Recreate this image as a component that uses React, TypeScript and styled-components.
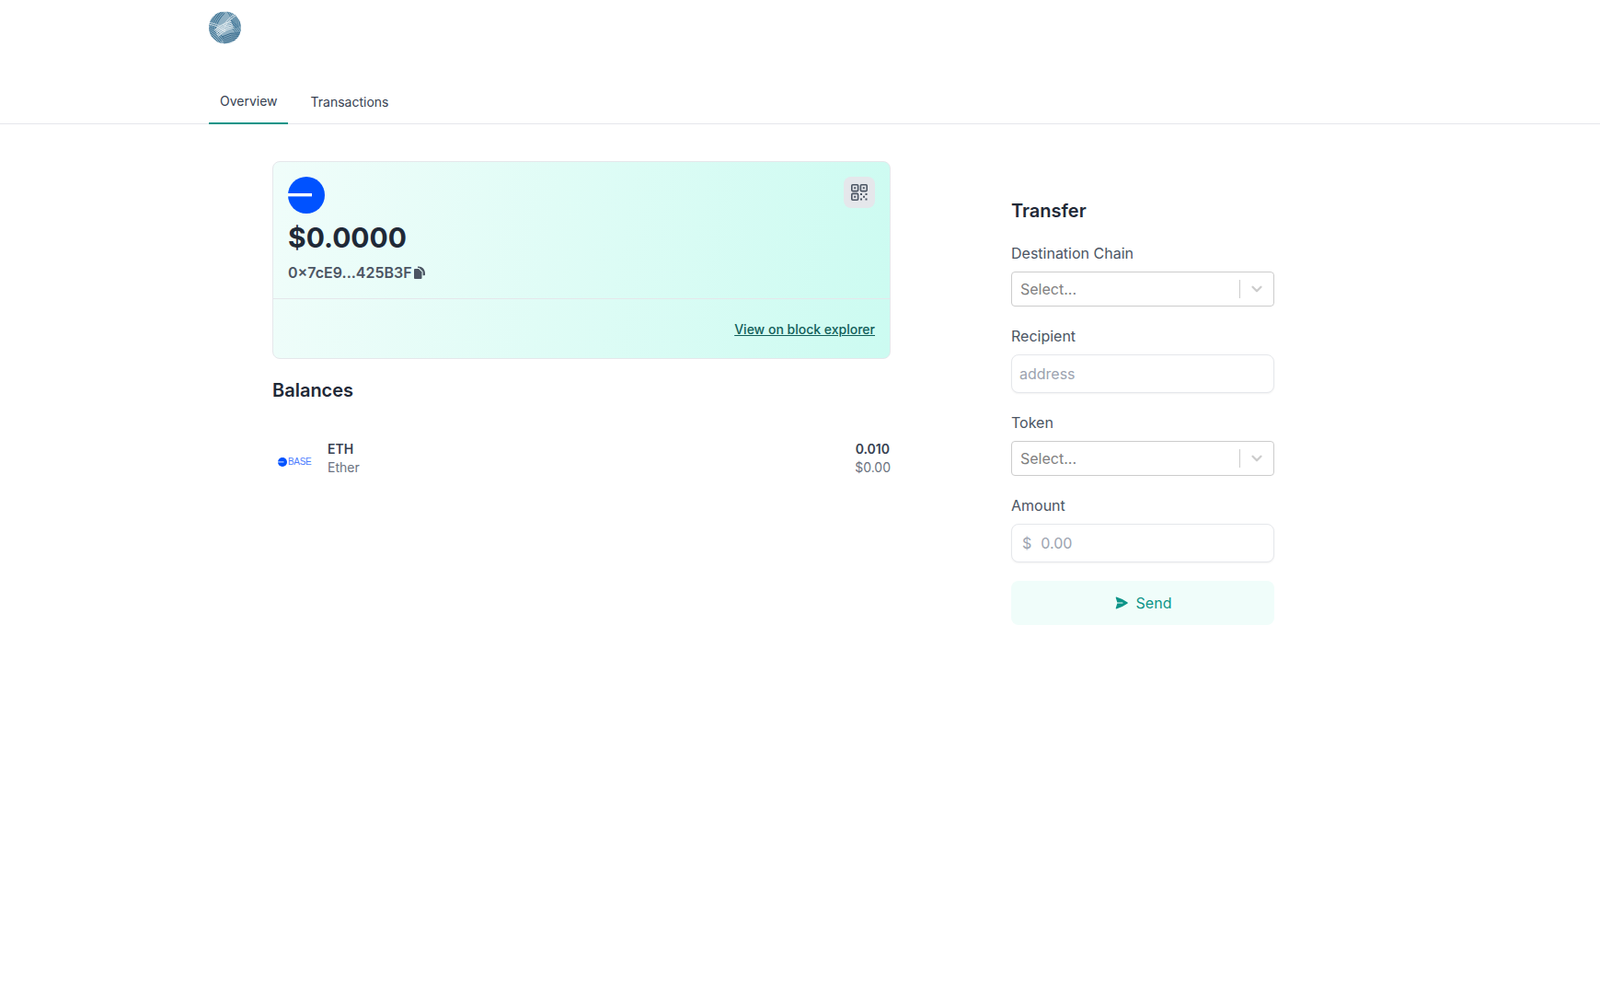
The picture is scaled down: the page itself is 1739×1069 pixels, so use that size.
import React from 'react';
import styled, { createGlobalStyle } from 'styled-components';
import { ChevronDown } from 'lucide-react';

const GlobalStyle = createGlobalStyle`
    * {
        box-sizing: border-box;
    }

    body {
        margin: 0;
        background: #fff;
        font-family: Inter, "Liberation Sans", sans-serif;
        color: #374151;
    }
`;

const Page = styled.div`
    min-height: 1069px;
`;

const Header = styled.header`
    padding: 12px 0 0 227px;
    height: 94px;
`;

const TabBar = styled.nav`
    display: flex;
    height: 41px;
    padding-left: 227px;
    border-bottom: 1px solid #e5e7eb;
`;

const Tab = styled.a<{ $active?: boolean }>`
    display: block;
    height: 41px;
    padding: ${({ $active }) => ($active ? '7px 11px 0 12px' : '8px 12px 0')};
    margin-right: ${({ $active }) => ($active ? '13px' : '0')};
    font-size: 14px;
    line-height: 17px;
    color: #374151;
    border-bottom: ${({ $active }) => ($active ? '2px solid #0d9488' : 'none')};
`;

const Main = styled.main`
    display: flex;
    padding: 40px 0 0 296px;
`;

const LeftColumn = styled.section`
    width: 672px;
`;

const RightColumn = styled.section`
    width: 286px;
    margin-left: 131px;
    padding-top: 40px;
`;

const Card = styled.div`
    height: 215px;
    border: 1px solid #e5e7eb;
    border-radius: 8px;
    background: linear-gradient(100deg, #f0fdfa, #ccfbf1);
`;

const CardTop = styled.div`
    position: relative;
    height: 149px;
    padding: 16px;
    border-bottom: 1px solid #e5e7eb;
`;

const QrButton = styled.div`
    position: absolute;
    top: 16px;
    right: 16px;
    width: 34px;
    height: 34px;
    display: flex;
    align-items: center;
    justify-content: center;
    border-radius: 8px;
    background: #e5e7eb;
`;

const Amount = styled.div`
    margin-top: 4px;
    font-size: 30px;
    line-height: 36px;
    font-weight: 700;
    color: #1f2937;
`;

const Address = styled.div`
    display: flex;
    align-items: center;
    gap: 2px;
    margin-top: 8px;
    font-size: 16px;
    line-height: 24px;
    font-weight: 600;
    color: #4b5563;
`;

const CardBottom = styled.div`
    display: flex;
    justify-content: flex-end;
    padding: 23px 16px 0;
`;

const ExplorerLink = styled.a`
    font-size: 14px;
    line-height: 20px;
    font-weight: 500;
    color: #115e59;
    text-decoration: underline;
`;

const SectionTitle = styled.h2`
    margin: 0;
    font-size: 20px;
    line-height: 28px;
    font-weight: 600;
    color: #1f2937;
`;

const BalancesTitle = styled(SectionTitle)`
    margin-top: 20px;
`;

const BalanceRow = styled.div`
    display: flex;
    align-items: center;
    margin-top: 40px;
`;

const ChainLogo = styled.div`
    display: flex;
    align-items: center;
    width: 60px;
    padding: 7px 0 0 6px;
    gap: 1px;
`;

const ChainName = styled.span`
    font-family: "Liberation Sans", sans-serif;
    font-size: 10px;
    line-height: 12px;
    letter-spacing: -0.3px;
    color: #4d7dff;
`;

const TokenInfo = styled.div`
    flex: 1;
`;

const TokenValues = styled.div`
    text-align: right;
`;

const StrongLine = styled.div<{ $inset?: boolean }>`
    padding-right: ${({ $inset }) => ($inset ? '1px' : '0')};
    font-size: 14px;
    line-height: 20px;
    font-weight: 600;
    color: #374151;
`;

const MutedLine = styled.div`
    font-size: 14px;
    line-height: 20px;
    color: #6b7280;
`;

const TransferTitle = styled(SectionTitle)`
    margin-bottom: 20px;
`;

const FieldLabel = styled.label`
    display: block;
    margin-bottom: 8px;
    font-size: 16px;
    line-height: 24px;
    color: #4b5563;
`;

const Field = styled.div<{ $gap: number }>`
    margin-bottom: ${({ $gap }) => $gap}px;
`;

const SelectBox = styled.div`
    display: flex;
    align-items: center;
    height: 38px;
    padding-left: 9px;
    border: 1px solid #cccccc;
    border-radius: 4px;
    background: #fff;
    font-size: 16px;
    color: #808080;
`;

const SelectValue = styled.span`
    flex: 1;
`;

const SelectSeparator = styled.span`
    width: 1px;
    height: 20px;
    background: #cccccc;
`;

const SelectArrow = styled.span`
    display: flex;
    width: 36px;
    justify-content: center;
    color: #cccccc;
`;

const InputBox = styled.div`
    display: flex;
    align-items: center;
    height: 42px;
    padding: 0 8px;
    border: 1px solid #e5e7eb;
    border-radius: 8px;
    background: #fff;
    box-shadow: 0 1px 2px rgba(0, 0, 0, 0.05);
    font-size: 16px;
    color: #9ca3af;
`;

const AmountPrefix = styled.span`
    margin: 0 10px 0 3px;
`;

const SendButton = styled.button`
    display: flex;
    align-items: center;
    justify-content: center;
    gap: 8px;
    width: 100%;
    height: 48px;
    border: none;
    border-radius: 8px;
    background: #f0fdfa;
    font-family: inherit;
    font-size: 16px;
    color: #0d9488;
`;

// fine hatch patches that give the logo its woven, thumbprint look
const logoPatches = [
    { x: 8, y: 8, angle: -60, color: '#336a8d', count: 6 },
    { x: 27, y: 8, angle: 70, color: '#467a9b', count: 5 },
    { x: 6, y: 26, angle: 40, color: '#336a8d', count: 5 },
    { x: 25, y: 29, angle: -12, color: '#2f6487', count: 5 },
    { x: 28, y: 19, angle: 50, color: '#467a9b', count: 4 },
    { x: 17, y: 19, angle: -28, color: '#e8f0f3', count: 5 },
    { x: 23, y: 10, angle: -45, color: '#dce7ec', count: 2 },
    { x: 9, y: 17, angle: 25, color: '#dce7ec', count: 2 },
];

function TwistLogo() {
    return (
        <svg width="35" height="36" viewBox="0 0 35 35">
            <defs>
                <clipPath id="logo-clip">
                    <circle cx="17.5" cy="17.5" r="17.5" />
                </clipPath>
            </defs>
            <g clipPath="url(#logo-clip)">
                <rect width="35" height="35" fill="#8fb0c3" />
                {logoPatches.map((patch) => (
                    <g key={patch.x + '-' + patch.y} transform={`translate(${patch.x} ${patch.y}) rotate(${patch.angle})`}>
                        {[...Array(patch.count)].map((_, index) => {
                            const offset = (index - (patch.count - 1) / 2) * 1.9;
                            return (
                                <path
                                    key={index}
                                    d={`M-10 ${offset} Q0 ${offset - 3} 10 ${offset}`}
                                    fill="none"
                                    stroke={patch.color}
                                    strokeWidth="0.9"
                                />
                            );
                        })}
                    </g>
                ))}
            </g>
        </svg>
    );
}

function BaseMark({ size }: { size: number }) {
    return (
        <svg width={size} height={size} viewBox="0 0 40 40">
            <circle cx="20" cy="20" r="20" fill="#0052ff" />
            <rect x="0" y="18" width="26" height="3.4" fill="#fff" />
        </svg>
    );
}

function QrIcon() {
    return (
        <svg width="20" height="20" viewBox="0 0 20 20" fill="none" stroke="#4b5563" strokeWidth="1.6">
            <rect x="1.8" y="1.8" width="6.8" height="6.8" rx="1" />
            <rect x="11.4" y="1.8" width="6.8" height="6.8" rx="1" />
            <rect x="1.8" y="11.4" width="6.8" height="6.8" rx="1" />
            <g fill="#4b5563" stroke="none">
                <rect x="4.2" y="4.2" width="2" height="2" />
                <rect x="13.8" y="4.2" width="2" height="2" />
                <rect x="4.2" y="13.8" width="2" height="2" />
                <rect x="11" y="11" width="2" height="2" />
                <rect x="16.5" y="11" width="2" height="2" />
                <rect x="14" y="13.8" width="2" height="2" />
                <rect x="11" y="16.5" width="2" height="2" />
                <rect x="16.5" y="16.5" width="2" height="2" />
            </g>
        </svg>
    );
}

function CopyIcon() {
    return (
        <svg width="12" height="14" viewBox="0 0 12 14" fill="#4b5563">
            <path d="M1 3 H5 L8.5 6.5 V13 a1 1 0 0 1 -1 1 H1 a1 1 0 0 1 -1 -1 V4 a1 1 0 0 1 1 -1 Z" />
            <path d="M4 0.6 C8.5 0.2 12 3.5 12 8 V9.5 a0.8 0.8 0 0 1 -0.8 0.8 H9.6 V6 L5.6 2 H4 Z" />
        </svg>
    );
}

function SendIcon() {
    return (
        <svg width="16" height="16" viewBox="0 0 24 24" fill="#0d9488">
            <path d="M3.478 2.405a.75.75 0 00-.926.94l2.432 7.905H13.5a.75.75 0 010 1.5H4.984l-2.432 7.905a.75.75 0 00.926.94 60.519 60.519 0 0018.445-8.986.75.75 0 000-1.218A60.517 60.517 0 003.478 2.405z" />
        </svg>
    );
}

export default function App() {
    return (
        <Page>
            <GlobalStyle />
            <Header>
                <TwistLogo />
            </Header>
            <TabBar>
                <Tab $active>Overview</Tab>
                <Tab>Transactions</Tab>
            </TabBar>
            <Main>
                <LeftColumn>
                    <Card>
                        <CardTop>
                            <BaseMark size={40} />
                            <QrButton>
                                <QrIcon />
                            </QrButton>
                            <Amount>$0.0000</Amount>
                            <Address>
                                0×7cE9...425B3F
                                <CopyIcon />
                            </Address>
                        </CardTop>
                        <CardBottom>
                            <ExplorerLink>View on block explorer</ExplorerLink>
                        </CardBottom>
                    </Card>
                    <BalancesTitle>Balances</BalancesTitle>
                    <BalanceRow>
                        <ChainLogo>
                            <BaseMark size={10} />
                            <ChainName>BASE</ChainName>
                        </ChainLogo>
                        <TokenInfo>
                            <StrongLine>ETH</StrongLine>
                            <MutedLine>Ether</MutedLine>
                        </TokenInfo>
                        <TokenValues>
                            <StrongLine $inset>0.010</StrongLine>
                            <MutedLine>$0.00</MutedLine>
                        </TokenValues>
                    </BalanceRow>
                </LeftColumn>
                <RightColumn>
                    <TransferTitle>Transfer</TransferTitle>
                    <Field $gap={20}>
                        <FieldLabel>Destination Chain</FieldLabel>
                        <SelectBox>
                            <SelectValue>Select...</SelectValue>
                            <SelectSeparator />
                            <SelectArrow>
                                <ChevronDown size={18} strokeWidth={3} />
                            </SelectArrow>
                        </SelectBox>
                    </Field>
                    <Field $gap={20}>
                        <FieldLabel>Recipient</FieldLabel>
                        <InputBox>address</InputBox>
                    </Field>
                    <Field $gap={20}>
                        <FieldLabel>Token</FieldLabel>
                        <SelectBox>
                            <SelectValue>Select...</SelectValue>
                            <SelectSeparator />
                            <SelectArrow>
                                <ChevronDown size={18} strokeWidth={3} />
                            </SelectArrow>
                        </SelectBox>
                    </Field>
                    <Field $gap={20}>
                        <FieldLabel>Amount</FieldLabel>
                        <InputBox>
                            <AmountPrefix>$</AmountPrefix>
                            0.00
                        </InputBox>
                    </Field>
                    <SendButton>
                        <SendIcon />
                        Send
                    </SendButton>
                </RightColumn>
            </Main>
        </Page>
    );
}
